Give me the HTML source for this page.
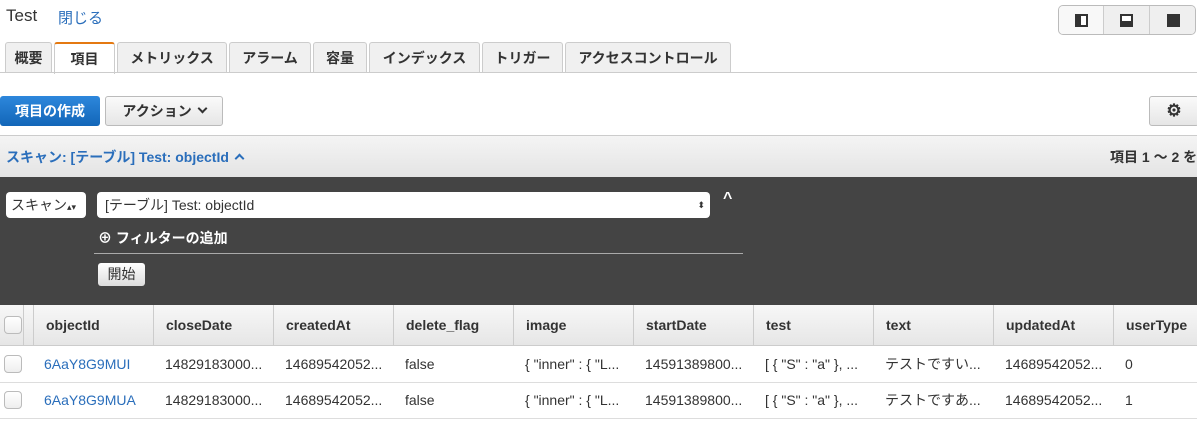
<!DOCTYPE html>
<html><head><meta charset="utf-8"><style>
*{box-sizing:border-box;margin:0;padding:0}
body{width:1197px;height:425px;overflow:hidden;background:#fff;font-family:"Liberation Sans","Noto Sans CJK JP",sans-serif;font-size:14px;color:#333;position:relative}
.a{position:absolute}
.tab{position:absolute;top:42px;height:31px;background:#f0f0f0;border:1px solid #ccc;border-bottom:none;border-radius:3px 3px 0 0;font-weight:bold;font-size:14px;line-height:30px;text-align:center;color:#333}
.tab.on{background:#fff;border-top:2px solid #e47911;height:32px}
.btn{position:absolute;border:1px solid #bbb;border-radius:3px;background:linear-gradient(#fafafa,#e6e6e6);font-weight:bold;text-align:center}
.th{position:absolute;top:305px;height:41px;line-height:41px;border-left:1px solid #ccc;padding-left:12px;font-weight:bold;font-size:14px;color:#333}
.td{position:absolute;height:36px;line-height:36px;padding-left:12px;font-size:14px;color:#333;white-space:nowrap}
.cb{position:absolute;left:4px;width:18px;height:18px;border:1px solid #bbb;border-radius:4px;background:linear-gradient(#fff,#eee)}
</style></head><body>
<div class="a" style="left:6px;top:6px;font-size:17px;color:#333">Test</div>
<div class="a" style="left:58px;top:7px;font-size:15px;color:#2a6ebb">閉じる</div>
<div class="a" style="left:1058px;top:5px;width:138px;height:30px;border:1px solid #bbb;border-radius:5px;background:#f3f3f3;overflow:hidden">
 <div class="a" style="left:0;top:0;width:45px;height:28px;background:#f8f8f8;border-right:1px solid #ccc"><div class="a" style="left:16px;top:8px;width:13px;height:13px;border:2px solid #333;border-left-width:6px;background:#fff"></div></div>
 <div class="a" style="left:45px;top:0;width:46px;height:28px;border-right:1px solid #ccc;background:#efefef"><div class="a" style="left:16px;top:8px;width:13px;height:13px;border:2px solid #333;border-bottom-width:6px;background:#fff"></div></div>
 <div class="a" style="left:91px;top:0;width:46px;height:28px;background:#efefef"><div class="a" style="left:17px;top:8px;width:13px;height:13px;background:#333"></div></div>
</div>
<div class="tab" style="left:5px;width:47px">概要</div>
<div class="tab on" style="left:54px;width:61px">項目</div>
<div class="tab" style="left:117px;width:110px">メトリックス</div>
<div class="tab" style="left:229px;width:82px">アラーム</div>
<div class="tab" style="left:313px;width:54px">容量</div>
<div class="tab" style="left:369px;width:111px">インデックス</div>
<div class="tab" style="left:482px;width:81px">トリガー</div>
<div class="tab" style="left:565px;width:166px">アクセスコントロール</div>
<div class="a" style="left:0;top:72px;width:1197px;border-top:1px solid #ccc"></div>
<div class="a" style="left:0;top:96px;width:100px;height:30px;border-radius:3px;background:linear-gradient(#2d87dc,#1266b8);color:#fff;font-weight:bold;line-height:30px;text-align:center">項目の作成</div>
<div class="btn" style="left:105px;top:96px;width:118px;height:30px;line-height:28px">アクション <span style="display:inline-block;width:7px;height:7px;border-right:2.5px solid #333;border-bottom:2.5px solid #333;transform:rotate(45deg);margin:0 0 4px 3px"></span></div>
<div class="btn" style="left:1149px;top:96px;width:50px;height:30px;line-height:28px;font-size:17px">⚙</div>
<div class="a" style="left:0;top:135px;width:1197px;height:42px;border-top:1px solid #ccc;background:linear-gradient(#f4f4f4,#e4e4e4)"></div>
<div class="a" style="left:6px;top:147px;font-weight:bold;color:#2a6ebb;font-size:14px">スキャン: [テーブル] Test: objectId <span style="display:inline-block;width:7px;height:7px;border-left:2.5px solid #2a6ebb;border-top:2.5px solid #2a6ebb;transform:rotate(45deg);margin:0 0 0 3px"></span></div>
<div class="a" style="left:1110px;top:147px;font-weight:bold;color:#333;white-space:nowrap">項目 1 ～ 2 を表示</div>
<div class="a" style="left:0;top:177px;width:1197px;height:128px;background:#444"></div>
<div class="a" style="left:6px;top:192px;width:80px;height:26px;background:#fff;border-radius:4px;line-height:26px;padding-left:5px;font-size:14px">スキャン<span style="font-size:9px">▴▾</span></div>
<div class="a" style="left:97px;top:192px;width:613px;height:26px;background:#fff;border-radius:4px;line-height:26px;padding-left:8px">[テーブル] Test: objectId<span style="position:absolute;right:5px;top:0;font-size:9px">⬍</span></div>
<div class="a" style="left:723px;top:190px;color:#fff;font-size:16px;font-weight:bold">^</div>
<div class="a" style="left:98px;top:228px;color:#fff;font-weight:bold">⊕ フィルターの追加</div>
<div class="a" style="left:94px;top:253px;width:649px;border-top:1px solid #aaa"></div>
<div class="a" style="left:98px;top:263px;width:47px;height:23px;border-radius:3px;background:linear-gradient(#fff,#ddd);line-height:23px;text-align:center">開始</div>
<div class="a" style="left:0;top:305px;width:1197px;height:41px;background:linear-gradient(#f7f7f7,#e6e6e6);border-bottom:1px solid #ccc"></div>
<div class="cb" style="top:316px"></div>
<div class="th" style="left:23px;width:0;border-left:1px solid #ccc"></div>
<div class="th" style="left:33px">objectId</div>
<div class="th" style="left:153px">closeDate</div>
<div class="th" style="left:273px">createdAt</div>
<div class="th" style="left:393px">delete_flag</div>
<div class="th" style="left:513px">image</div>
<div class="th" style="left:633px">startDate</div>
<div class="th" style="left:753px">test</div>
<div class="th" style="left:873px">text</div>
<div class="th" style="left:993px">updatedAt</div>
<div class="th" style="left:1113px">userType</div>
<div class="a" style="left:0;top:382px;width:1197px;border-top:1px solid #ddd"></div>
<div class="a" style="left:0;top:418px;width:1197px;border-top:1px solid #ddd"></div>
<div class="cb" style="top:355px"></div>
<div class="cb" style="top:391px"></div>
<div class="td" style="left:32px;top:346px;color:#2a6ebb">6AaY8G9MUI</div>
<div class="td" style="left:153px;top:346px">14829183000...</div>
<div class="td" style="left:273px;top:346px">14689542052...</div>
<div class="td" style="left:393px;top:346px">false</div>
<div class="td" style="left:513px;top:346px">{ "inner" : { "L...</div>
<div class="td" style="left:633px;top:346px">14591389800...</div>
<div class="td" style="left:753px;top:346px">[ { "S" : "a" }, ...</div>
<div class="td" style="left:873px;top:346px">テストですい...</div>
<div class="td" style="left:993px;top:346px">14689542052...</div>
<div class="td" style="left:1113px;top:346px">0</div>
<div class="td" style="left:32px;top:382px;color:#2a6ebb">6AaY8G9MUA</div>
<div class="td" style="left:153px;top:382px">14829183000...</div>
<div class="td" style="left:273px;top:382px">14689542052...</div>
<div class="td" style="left:393px;top:382px">false</div>
<div class="td" style="left:513px;top:382px">{ "inner" : { "L...</div>
<div class="td" style="left:633px;top:382px">14591389800...</div>
<div class="td" style="left:753px;top:382px">[ { "S" : "a" }, ...</div>
<div class="td" style="left:873px;top:382px">テストですあ...</div>
<div class="td" style="left:993px;top:382px">14689542052...</div>
<div class="td" style="left:1113px;top:382px">1</div>
</body></html>
